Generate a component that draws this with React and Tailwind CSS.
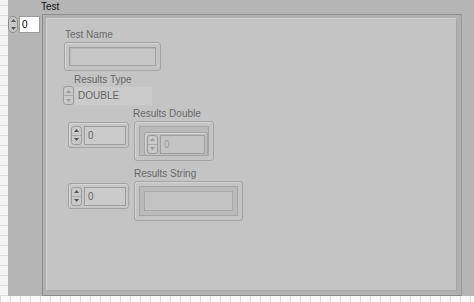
import React from "react";

const font = { fontFamily: '"Liberation Sans", Arial, sans-serif' };

function Spin({ dim }) {
    const c = dim ? "#9a9a9a" : "#555";
    return (
        <div className="flex flex-col w-[11px] h-[19px] rounded-[3px] border border-[#9c9c9c] bg-[#c9c9c9] overflow-hidden">
            <div className="flex-1 flex items-center justify-center border-b border-[#a8a8a8]">
                <svg width="5" height="3" viewBox="0 0 5 3"><path d="M0 3 L2.5 0 L5 3 Z" fill={c} /></svg>
            </div>
            <div className="flex-1 flex items-center justify-center">
                <svg width="5" height="3" viewBox="0 0 5 3"><path d="M0 0 L2.5 3 L5 0 Z" fill={c} /></svg>
            </div>
        </div>
    );
}

function Numeric({ className, faint }) {
    return (
        <div className={"absolute flex items-center gap-[2px] px-[2px] rounded-[3px] border border-[#a2a2a2] bg-[#c6c6c6] shadow-[inset_1px_1px_0_#d6d6d6] " + className}>
            <Spin dim={faint} />
            <div className={"flex-1 h-[19px] border border-[#9e9e9e] pl-[3px] text-[10px] leading-[17px] " + (faint ? "bg-[#c4c4c4] text-[#a0a0a0]" : "bg-[#cbcbcb] text-[#666]")}>0</div>
        </div>
    );
}

function Label({ className, children }) {
    return <div className={"absolute text-[10px] leading-none text-[#686868] " + className}>{children}</div>;
}

export default function App() {
    return (
        <div className="w-[474px] h-[302px] flex flex-col bg-[#f2f2f2]" style={font}>
            <div className="flex h-[296px]">
                <div className="w-[8px] bg-[repeating-linear-gradient(0deg,#dcdcdc_0px,#dcdcdc_1px,#f4f4f4_1px,#f4f4f4_10px)]" />
                <div className="flex-1 bg-[#b5b5b5] flex flex-col">
                    <div className="pl-[33px] h-[14px] text-[10px] leading-[14px] text-[#111]">Test</div>
                    <div className="flex flex-1">
                        <div className="w-[34px] flex items-start pt-[2px]">
                            <div className="flex items-center">
                                <div className="flex flex-col w-[10px] h-[17px] rounded-[5px] border border-[#8e8e8e] bg-[#c8c8c8] overflow-hidden">
                                    <div className="flex-1 flex items-center justify-center">
                                        <svg width="5" height="3" viewBox="0 0 5 3"><path d="M0 3 L2.5 0 L5 3 Z" fill="#555" /></svg>
                                    </div>
                                    <div className="flex-1 flex items-center justify-center">
                                        <svg width="5" height="3" viewBox="0 0 5 3"><path d="M0 0 L2.5 3 L5 0 Z" fill="#555" /></svg>
                                    </div>
                                </div>
                                <div className="ml-[1px] w-[21px] h-[17px] bg-white border border-[#9a9a9a] pl-[2px] text-[10px] leading-[15px] text-[#000]">0</div>
                            </div>
                        </div>
                        <div className="w-[420px] flex border border-[#8c8c8c] border-r-[#999] p-[3px] pr-[4px] pb-[4px] bg-[#b0b0b0]">
                            <div className="flex-1 relative bg-[#c4c4c4] border border-[#d3d3d3] border-r-[#a4a4a4] border-b-[#a4a4a4] rounded-[2px]">
                                <Label className="left-[18px] top-[11px]">Test Name</Label>
                                <div className="absolute left-[17px] top-[23px] w-[97px] h-[29px] rounded-[3px] border border-[#a3a3a3] shadow-[inset_1px_1px_0_#d4d4d4] p-[4px]">
                                    <div className="w-full h-full border border-[#a0a0a0] bg-[#c7c7c7] shadow-[inset_1px_1px_0_#b8b8b8]" />
                                </div>

                                <Label className="left-[27px] top-[56px]">Results Type</Label>
                                <div className="absolute left-[16px] top-[67px] flex items-center">
                                    <Spin dim />
                                    <div className="ml-[1px] w-[77px] h-[18px] bg-[#cbcbcb] pl-[3px] text-[10px] leading-[18px] text-[#666]">DOUBLE</div>
                                </div>

                                <Numeric className="left-[21px] top-[103px] w-[61px] h-[26px]" />
                                <Label className="left-[86px] top-[90px]">Results Double</Label>
                                <div className="absolute left-[87px] top-[102px] w-[80px] h-[40px] rounded-[3px] border border-[#a3a3a3] shadow-[inset_1px_1px_0_#d4d4d4] p-[4px]">
                                    <div className="w-full h-full border border-[#a6a6a6] bg-[#bababa] relative">
                                        <Numeric faint className="left-[4px] top-[5px] w-[64px] h-[24px] !bg-[#bfbfbf]" />
                                    </div>
                                </div>

                                <Numeric className="left-[21px] top-[164px] w-[61px] h-[26px]" />
                                <Label className="left-[87px] top-[150px]">Results String</Label>
                                <div className="absolute left-[87px] top-[162px] w-[109px] h-[40px] rounded-[3px] border border-[#a3a3a3] shadow-[inset_1px_1px_0_#d4d4d4] p-[4px]">
                                    <div className="w-full h-full border border-[#a6a6a6] bg-[#bababa] p-[4px]">
                                        <div className="w-full h-full border border-[#a8a8a8] bg-[#c3c3c3]" />
                                    </div>
                                </div>
                            </div>
                        </div>
                        <div className="flex-1" />
                    </div>
                </div>
            </div>
            <div className="flex-1 bg-[repeating-linear-gradient(90deg,#dcdcdc_0px,#dcdcdc_1px,#fafafa_1px,#fafafa_10px)]" />
        </div>
    );
}
